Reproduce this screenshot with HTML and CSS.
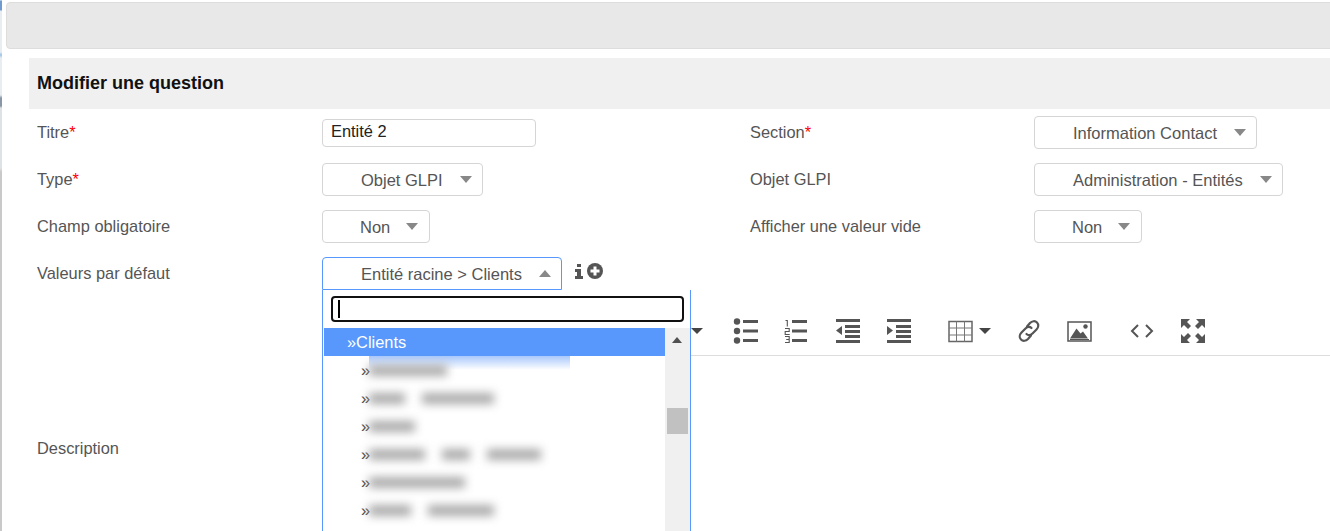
FILE: index.html
```html
<!DOCTYPE html>
<html lang="fr">
<head>
    <meta charset="UTF-8">
    <title>Modifier une question</title>
    <link rel="stylesheet" href="styles.css">
</head>
<body>
<div class="edge"></div>
<div class="page">
    <div class="topbar"></div>
    <div class="panel">
        <h2 class="panel-title">Modifier une question</h2>

        <div class="row">
            <label class="lbl">Titre<span class="req">*</span></label>
            <div><input class="text-input" type="text" value="Entité 2"></div>
            <label class="lbl">Section<span class="req">*</span></label>
            <div><span class="sel">Information Contact<i class="arrow"></i></span></div>
        </div>
        <div class="row">
            <label class="lbl">Type<span class="req">*</span></label>
            <div><span class="sel">Objet GLPI<i class="arrow"></i></span></div>
            <label class="lbl">Objet GLPI</label>
            <div><span class="sel">Administration - Entités<i class="arrow"></i></span></div>
        </div>
        <div class="row">
            <label class="lbl">Champ obligatoire</label>
            <div><span class="sel sel-short">Non<i class="arrow"></i></span></div>
            <label class="lbl">Afficher une valeur vide</label>
            <div><span class="sel sel-short">Non<i class="arrow"></i></span></div>
        </div>
        <div class="row">
            <label class="lbl">Valeurs par défaut</label>
            <div class="open-wrap">
                <span class="sel sel-open">Entité racine &gt; Clients<i class="arrow arrow-up"></i></span>
                <svg class="info-icons" width="30" height="16" viewBox="0 0 30 16">
                    <path fill="#555" d="M3 1h4v3H3zM1 6h6v7h2v3H1v-3h2V9H1z"/>
                    <circle cx="21" cy="8" r="8" fill="#555"/>
                    <path fill="#fff" d="M19.500 3.500h3v3h3v3h-3v3h-3v-3h-3v-3h3z"/>
                </svg>
                <div class="dropdown">
                    <div class="search"><i class="caret"></i></div>
                    <ul class="results">
                        <li class="item-active">»Clients</li>
                        <li class="item"><span>»</span><b class="smear w78"></b></li>
                        <li class="item"><span>»</span><b class="smear w36"></b><b class="smear w72"></b></li>
                        <li class="item"><span>»</span><b class="smear w46"></b></li>
                        <li class="item"><span>»</span><b class="smear w56"></b><b class="smear w28"></b><b class="smear w54"></b></li>
                        <li class="item"><span>»</span><b class="smear w96"></b></li>
                        <li class="item"><span>»</span><b class="smear w42"></b><b class="smear w66"></b></li>
                    </ul>
                    <div class="glare"></div>
                    <div class="scrollbar">
                        <i class="scroll-up"></i>
                        <i class="scroll-thumb"></i>
                    </div>
                </div>
            </div>
        </div>
        <div class="row row-editor">
            <label class="lbl">Description</label>
            <div class="editor">
                <div class="toolbar">
                    <i class="tb-caret"></i>
                    <svg class="tb-icon g-list" viewBox="0 0 26 26">
                        <circle cx="4" cy="3.500" r="3.200" fill="#555"/><circle cx="4" cy="13" r="3.200" fill="#555"/><circle cx="4" cy="22.500" r="3.200" fill="#555"/>
                        <path fill="#555" d="M10 2h15v3H10zM10 11.500h15v3H10zM10 21h15v3H10z"/>
                    </svg>
                    <svg class="tb-icon" viewBox="0 0 26 26">
                        <path fill="none" stroke="#555" stroke-width="1.100" d="M1.500 2.500h1.800v6M1 10.500h4.200v3h-4v3h4.500M1 18.500h4.200v3h-3M5.200 21.500v3h-4.200"/>
                        <path fill="#555" d="M8 2h15v3H8zM8 11.500h15v3H8zM8 21h15v3H8z"/>
                    </svg>
                    <svg class="tb-icon" viewBox="0 0 26 26">
                        <path fill="#555" d="M1 1h24v3H1zM10 7h15v3H10zM10 12h15v3H10zM10 17h15v3H10zM1 22h24v3H1zM7 8v9l-6-4.500z"/>
                    </svg>
                    <svg class="tb-icon" viewBox="0 0 26 26">
                        <path fill="#555" d="M1 1h24v3H1zM10 7h15v3H10zM10 12h15v3H10zM10 17h15v3H10zM1 22h24v3H1zM1 8v9l6-4.500z"/>
                    </svg>
                    <svg class="tb-icon g-table" viewBox="0 0 26 26">
                        <path fill="none" stroke="#666" stroke-width="1.500" d="M1 3.500h23v20H1z"/>
                        <path fill="none" stroke="#777" stroke-width="1" d="M8.500 3.500v20M16.500 3.500v20M1 10h23M1 17h23"/>
                    </svg>
                    <i class="tb-caret tb-caret-near"></i>
                    <svg class="tb-icon g-link" viewBox="0 0 26 26">
                        <path fill="none" stroke="#555" stroke-width="2.200" stroke-linecap="round" d="M11 8.500l3-3.500c2-2 5-2.500 7-.5s1.500 5-.5 7l-4 4c-2 2-4.500 2-6 .5"/>
                        <path fill="none" stroke="#555" stroke-width="2.200" stroke-linecap="round" d="M15 17.500l-3 3.500c-2 2-5 2.500-7 .5s-1.500-5 .5-7l4-4c2-2 4.500-2 6-.5"/>
                    </svg>
                    <svg class="tb-icon" viewBox="0 0 26 26">
                        <path fill="none" stroke="#555" stroke-width="1.500" d="M1 4h23v19H1z"/>
                        <path fill="#555" d="M3 20.500l6.500-10 4 5 2.500-2 5 7zM3 21h19v1H3z"/>
                        <circle cx="18.500" cy="8.500" r="2.200" fill="#555"/>
                    </svg>
                    <svg class="tb-icon g-code" viewBox="0 0 26 26">
                        <path fill="none" stroke="#555" stroke-width="2" d="M9 7l-6 6 6 6M17 7l6 6-6 6"/>
                    </svg>
                    <svg class="tb-icon g-full" viewBox="0 0 26 26">
                        <path fill="#555" d="M1 1h9L7 4l4 4-3 3-4-4-3 3zM25 1h-9l3 3-4 4 3 3 4-4 3 3zM1 25h9l-3-3 4-4-3-3-4 4-3-3zM25 25h-9l3-3-4-4 3-3 4 4 3-3z"/>
                    </svg>
                </div>
                <div class="editor-body"></div>
            </div>
        </div>
    </div>
</div>
</body>
</html>
```

FILE: styles.css
```css
* {
    margin: 0;
    padding: 0;
    box-sizing: border-box;
}
html, body {
    height: 100%;
    overflow: hidden;
}
body {
    display: flex;
    background: #fff;
    font-family: "Liberation Sans", Arial, sans-serif;
    font-size: 16.4px;
    color: #555;
}
.edge {
    width: 2px;
    flex: none;
    background: linear-gradient(#e8edf2 0, #6f9bd0 1px, #6f9bd0 10px, #e8edf2 11px, #e8edf2 52px, #9cc3e8 55px, #e8edf2 58px, #e8edf2 95px, #8a97a6 98px, #8a97a6 106px, #dfe2e5 108px, #dfe2e5 168px, #c9c9c9 172px);
}
.page {
    flex: 1;
    min-width: 0;
    padding: 2px 0 0 4px;
}
.topbar {
    height: 47px;
    margin-right: -10px;
    background: #e8e8e8;
    border: 1px solid #dddddd;
    border-radius: 4px;
}
.panel {
    margin: 9px 0 0 23px;
}
.panel-title {
    height: 51px;
    padding-left: 8px;
    background: #f0f0f0;
    color: #111;
    font-size: 18px;
    line-height: 51px;
}
.row {
    display: grid;
    grid-template-columns: 293px 428px 284px 1fr;
    align-items: center;
    height: 47px;
}
.row-editor {
    height: 302px;
}
.lbl {
    padding-left: 8px;
}
.req {
    color: #f00;
}
.row > .lbl:nth-child(3) {
    padding-left: 0;
}
.text-input {
    display: block;
    width: 214px;
    height: 28px;
    padding: 0 8px 2px;
    border: 1px solid #d5d5d5;
    border-radius: 4px;
    background: #fff;
    color: #222;
    font: 16.4px "Liberation Sans", Arial, sans-serif;
}
.sel {
    display: inline-flex;
    align-items: center;
    height: 33px;
    padding: 2px 10px 0 38px;
    border: 1px solid #d5d5d5;
    border-radius: 4px;
    background: #fff;
    font-size: 16.5px;
    white-space: nowrap;
    vertical-align: top;
}
.arrow {
    width: 0;
    height: 0;
    margin: -2px 0 0 17px;
    border-left: 6px solid transparent;
    border-right: 6px solid transparent;
    border-top: 7px solid #888;
}
.arrow-up {
    border-top: 0;
    border-bottom: 7px solid #888;
}
.sel-short {
    padding: 2px 11px 0 37px;
}
.sel-short .arrow {
    margin-left: 16px;
}
.open-wrap {
    position: relative;
    display: flex;
    align-items: center;
}
.sel-open {
    width: 240px;
    border-color: #5897fb;
    border-radius: 4px 4px 0 0;
}
.info-icons {
    margin: -6px 0 0 12px;
}
.dropdown {
    position: absolute;
    z-index: 5;
    top: 33px;
    left: 0;
    width: 369px;
    height: 260px;
    padding: 0 1px;
    border: 1px solid #5897fb;
    border-width: 0 1px;
    background: #fff;
}
.search {
    position: relative;
    width: 353px;
    height: 26px;
    margin: 6px 0 0 7px;
    border: 2px solid #111;
    border-radius: 4px;
}
.caret {
    position: absolute;
    top: 2px;
    left: 5px;
    width: 2px;
    height: 18px;
    background: #000;
}
.results {
    list-style: none;
    margin-top: 6px;
    width: 341px;
}
.item-active {
    height: 28px;
    padding-left: 23px;
    background: #5897fb;
    color: #fff;
    line-height: 28px;
}
.item {
    display: flex;
    align-items: center;
    height: 28px;
    padding-left: 37px;
    color: #444;
}
.item span {
    width: 8px;
    flex: none;
}
.smear {
    display: block;
    height: 11px;
    margin-right: 17px;
    background: #aaa;
    filter: blur(5px);
}
.w28 { width: 28px; }
.w36 { width: 36px; }
.w42 { width: 42px; }
.w46 { width: 46px; }
.w54 { width: 54px; }
.w56 { width: 56px; }
.w66 { width: 66px; }
.w72 { width: 72px; }
.w78 { width: 78px; }
.w96 { width: 96px; }
.glare {
    position: absolute;
    top: 66px;
    left: 46px;
    width: 201px;
    height: 14px;
    background: linear-gradient(#a9c8fb, #fff);
    z-index: -1;
}
.scrollbar {
    position: absolute;
    top: 38px;
    right: 0;
    bottom: 0;
    width: 25px;
    background: #f0f0f0;
}
.scroll-up {
    position: absolute;
    top: 9px;
    left: 7px;
    border-left: 5px solid transparent;
    border-right: 5px solid transparent;
    border-bottom: 6px solid #505050;
}
.scroll-thumb {
    position: absolute;
    top: 80px;
    left: 2px;
    width: 21px;
    height: 26px;
    background: #c1c1c1;
}
.editor {
    grid-column: 2 / 5;
    align-self: start;
}
.toolbar {
    display: flex;
    align-items: center;
    height: 59px;
    padding: 9px 0 0 369px;
    border-bottom: 1px solid #dddddd;
}
.tb-caret {
    flex: none;
    border-left: 6px solid transparent;
    border-right: 6px solid transparent;
    border-top: 6px solid #444;
}
.tb-caret-near {
    margin: 0 0 0 5px;
}
.tb-icon {
    flex: none;
    width: 26px;
    height: 26px;
    margin-left: 25px;
}
.tb-icon.g-list {
    margin-left: 30px;
}
.tb-icon.g-table {
    margin-left: 36px;
}
.tb-icon.g-link {
    margin-left: 25px;
}
.tb-icon.g-code {
    margin-left: 36px;
}
.tb-icon.g-full {
    margin-left: 25px;
}
```
